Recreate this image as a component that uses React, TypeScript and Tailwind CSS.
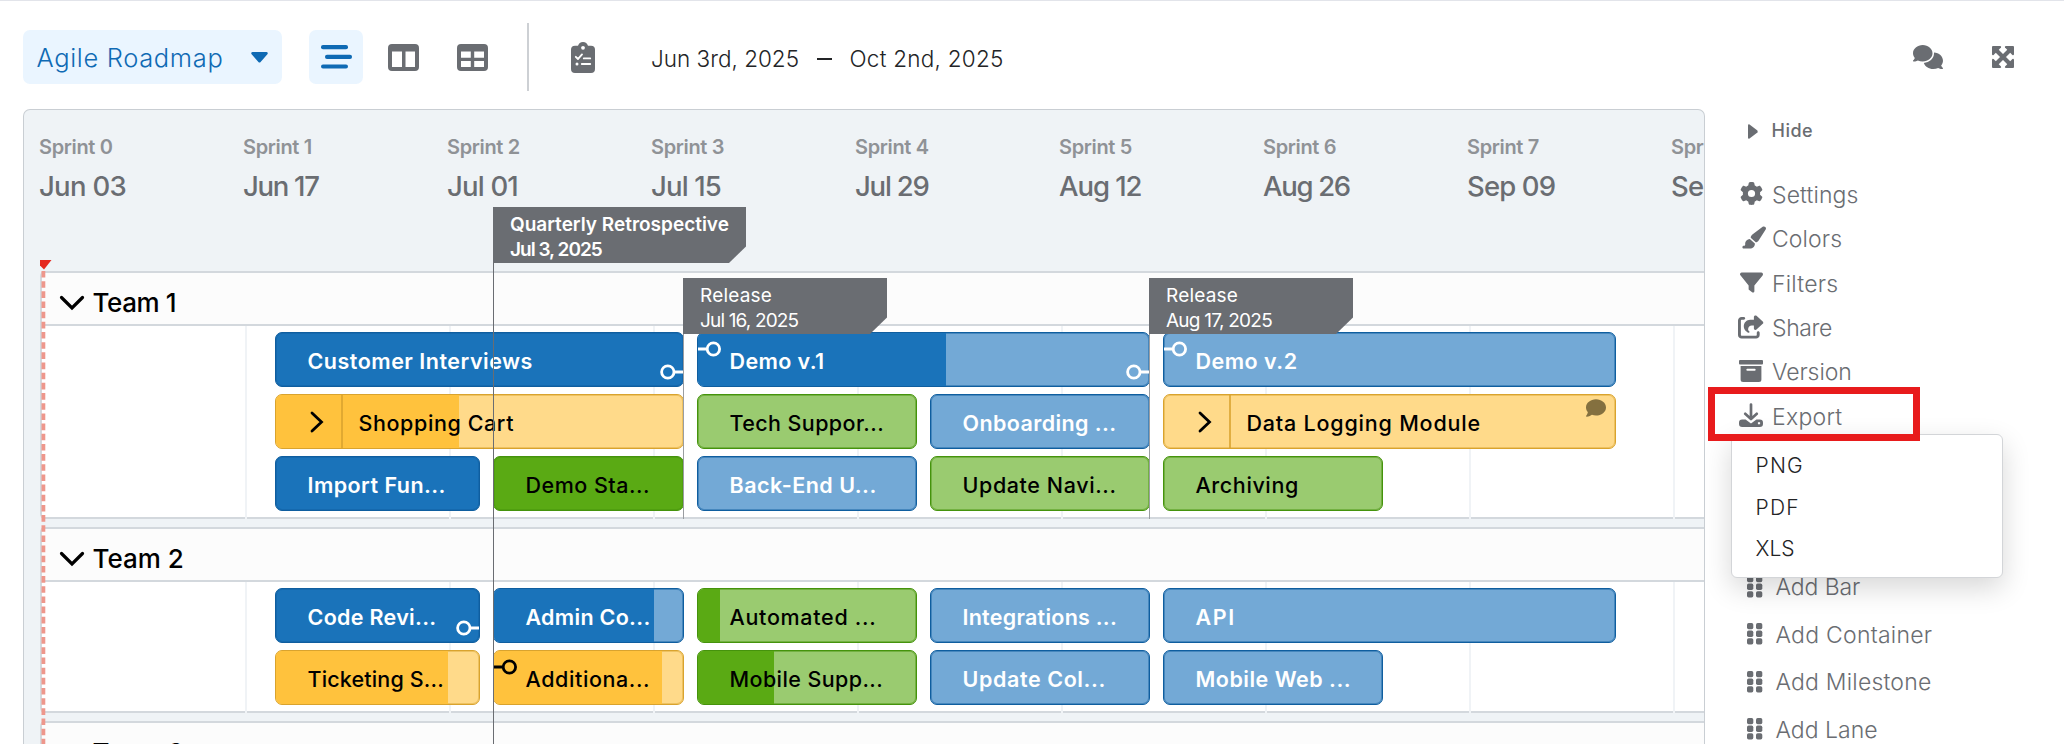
import type { ReactNode } from "react";
import {
  FaComment,
  FaComments,
  FaFilter,
  FaGear,
  FaPaintbrush,
  FaShareFromSquare,
} from "react-icons/fa6";

/* ---------- toolbar icons ---------- */

const TimelineIcon = () => (
  <svg width="31" height="24" viewBox="0 0 31 24" fill="currentColor">
    <rect x="0" y="0" width="27" height="4.2" rx="2" />
    <rect x="4" y="9.7" width="27" height="4.2" rx="2" />
    <rect x="0" y="19.4" width="27" height="4.2" rx="2" />
  </svg>
);

const ColumnsIcon = () => (
  <svg width="31" height="27" viewBox="0 0 31 27" fill="currentColor" fillRule="evenodd">
    <path d="M4 0H27a4 4 0 0 1 4 4V23a4 4 0 0 1-4 4H4a4 4 0 0 1-4-4V4a4 4 0 0 1 4-4ZM4 7.5V23H14V7.5ZM17.5 7.5V23H27V7.5Z" />
  </svg>
);

const TableIcon = () => (
  <svg width="31" height="27" viewBox="0 0 31 27" fill="currentColor" fillRule="evenodd">
    <path d="M4 0H27a4 4 0 0 1 4 4V23a4 4 0 0 1-4 4H4a4 4 0 0 1-4-4V4a4 4 0 0 1 4-4ZM4 7.5V13.7H13.8V7.5ZM17.2 7.5V13.7H27V7.5ZM4 17V23H13.8V17ZM17.2 17V23H27V17Z" />
  </svg>
);

const ClipboardIcon = () => (
  <svg width="24" height="31" viewBox="0 0 24 31">
    <path
      fill="currentColor"
      d="M12 0a5.4 5.4 0 0 1 5 3.8H20A4 4 0 0 1 24 7.8V27a4 4 0 0 1-4 4H4a4 4 0 0 1-4-4V7.8A4 4 0 0 1 4 3.8H7A5.4 5.4 0 0 1 12 0Z"
    />
    <circle cx="12" cy="5.8" r="1.9" fill="#fff" />
    <circle cx="6" cy="22" r="1.5" fill="#fff" />
    <g fill="none" stroke="#fff" strokeWidth="1.9" strokeLinecap="round" strokeLinejoin="round">
      <path d="M4.8 14.8 7 17l4-4.6" />
      <path d="M12.8 16.4h6.4M10.8 22h8.4" />
    </g>
  </svg>
);

const ExpandIcon = () => (
  <svg width="22" height="22" viewBox="0 0 22 22" fill="currentColor">
    <path d="M4.5 4.5 17.5 17.5M17.5 4.5 4.5 17.5" stroke="currentColor" strokeWidth="4.2" />
    {[0, 90, 180, 270].map((angle) => (
      <path key={angle} transform={`rotate(${angle} 11 11)`} d="M1 0H8.2Q9.6.2 9 1.6L1.6 9Q.2 9.6 0 8.2V1Q0 0 1 0Z" />
    ))}
  </svg>
);

/* ---------- sidebar icons ---------- */

const ArchiveIcon = () => (
  <svg width="24" height="22" viewBox="0 0 24 22" fill="currentColor" fillRule="evenodd">
    <rect x="0" y="0" width="24" height="4.4" rx="1" />
    <path d="M1.6 6H22.4V19.5A2.5 2.5 0 0 1 19.9 22H4.1A2.5 2.5 0 0 1 1.6 19.5ZM8.3 8.8a.9.9 0 0 0 0 1.9h7.4a.9.9 0 0 0 0-1.9Z" />
  </svg>
);

const DownloadIcon = () => (
  <svg width="24" height="24" viewBox="0 0 24 24">
    <path
      d="M12 1.5V15.6M6.2 10.8l5.8 5.2 5.8-5.2"
      fill="none"
      stroke="currentColor"
      strokeWidth="2.7"
      strokeLinecap="round"
      strokeLinejoin="round"
    />
    <path
      fill="currentColor"
      fillRule="evenodd"
      d="M3.2 16.6H6.6L12 20.6l5.4-4h3.4A3.2 3.2 0 0 1 24 19.8v1A3.2 3.2 0 0 1 20.8 24H3.2A3.2 3.2 0 0 1 0 20.8V19.8A3.2 3.2 0 0 1 3.2 16.6ZM20 19a1.2 1.2 0 1 0 .01 0Z"
    />
  </svg>
);

const GripIcon = () => (
  <svg width="16" height="22" viewBox="0 0 16 22" fill="currentColor">
    {[0, 7.6, 15.2].map((y) => (
      <g key={y}>
        <rect x="0" y={y} width="6.3" height="6.3" rx="1.7" />
        <rect x="9" y={y} width="6.3" height="6.3" rx="1.7" />
      </g>
    ))}
  </svg>
);

/* ---------- roadmap data ---------- */

const sprints = [
  { name: "Sprint 0", date: "Jun 03", track: "tracking-[-0.7px]" },
  { name: "Sprint 1", date: "Jun 17", track: "tracking-[-1.3px]" },
  { name: "Sprint 2", date: "Jul 01", track: "tracking-[-0.8px]" },
  { name: "Sprint 3", date: "Jul 15", track: "tracking-[-0.85px]" },
  { name: "Sprint 4", date: "Jul 29", track: "tracking-[-1.2px]" },
  { name: "Sprint 5", date: "Aug 12", track: "tracking-[-1.05px]" },
  { name: "Sprint 6", date: "Aug 26", track: "tracking-[-1.3px]" },
  { name: "Sprint 7", date: "Sep 09", track: "tracking-[-0.85px]" },
  { name: "Sprint 8", date: "Sep 23", track: "tracking-[-0.75px]" },
];

type Tone = "blue" | "lightBlue" | "green" | "lightGreen" | "yellow" | "lightYellow";

const tones: Record<Tone, string> = {
  blue: "bg-[#1a73ba] border-[#0f5e9f] text-white font-semibold",
  lightBlue: "bg-[#73a9d6] border-[#0f5e9f] text-white font-semibold",
  green: "bg-[#5aaa14] border-[#45930c] text-black font-medium",
  lightGreen: "bg-[#9acb70] border-[#45930c] text-black font-medium",
  yellow: "bg-[#ffc23d] border-[#d9a32e] text-black font-medium",
  lightYellow: "bg-[#ffda8a] border-[#d9a32e] text-black font-medium",
};

const innerEdge: Record<Tone, string> = {
  blue: "shadow-[inset_0_0_0_1px_rgba(15,94,159,0.45)]",
  lightBlue: "shadow-[inset_0_0_0_1px_rgba(15,94,159,0.45)]",
  green: "shadow-[inset_0_0_0_1px_rgba(69,147,12,0.45)]",
  lightGreen: "shadow-[inset_0_0_0_1px_rgba(69,147,12,0.45)]",
  yellow: "shadow-[inset_0_0_0_1px_rgba(217,163,46,0.45)]",
  lightYellow: "shadow-[inset_0_0_0_1px_rgba(217,163,46,0.45)]",
};

type BarData = {
  label: string;
  size: string; // left margin, width
  tone: Tone;
  done?: string; // colour and width of the completed part
  track?: string;
  group?: boolean;
  comment?: boolean;
  linkIn?: boolean;
  linkOut?: boolean;
};

const team1: BarData[][] = [
  [
    { label: "Customer Interviews", size: "ml-[233px] w-[409px]", tone: "blue", linkOut: true },
    {
      label: "Demo v.1",
      size: "ml-[13px] w-[453px]",
      tone: "lightBlue",
      done: "w-[248px] bg-[#1a73ba]",
      track: "tracking-[0.4px]",
      linkIn: true,
      linkOut: true,
    },
    { label: "Demo v.2", size: "ml-[13px] w-[453px]", tone: "lightBlue", linkIn: true },
  ],
  [
    {
      label: "Shopping Cart",
      size: "ml-[233px] w-[409px]",
      tone: "lightYellow",
      done: "w-[183px] bg-[#ffc23d]",
      track: "tracking-[0.6px]",
      group: true,
    },
    { label: "Tech Suppor...", size: "ml-[13px] w-[220px]", tone: "lightGreen", track: "tracking-[0.4px]" },
    { label: "Onboarding ...", size: "ml-[13px] w-[220px]", tone: "lightBlue", track: "tracking-[0.4px]" },
    {
      label: "Data Logging Module",
      size: "ml-[13px] w-[453px]",
      tone: "lightYellow",
      track: "tracking-[0.8px]",
      group: true,
      comment: true,
    },
  ],
  [
    { label: "Import Fun...", size: "ml-[233px] w-[205px]", tone: "blue", track: "tracking-[0.45px]" },
    { label: "Demo Sta...", size: "ml-[13px] w-[191px]", tone: "green", track: "tracking-[0.5px]" },
    { label: "Back-End U...", size: "ml-[13px] w-[220px]", tone: "lightBlue" },
    { label: "Update Navi...", size: "ml-[13px] w-[220px]", tone: "lightGreen", track: "tracking-[0.6px]" },
    { label: "Archiving", size: "ml-[13px] w-[220px]", tone: "lightGreen", track: "tracking-[0.6px]" },
  ],
];

const team2: BarData[][] = [
  [
    { label: "Code Revi...", size: "ml-[233px] w-[205px]", tone: "blue", track: "tracking-[0.3px]", linkOut: true },
    { label: "Admin Co...", size: "ml-[13px] w-[191px]", tone: "lightBlue", done: "w-[160px] bg-[#1a73ba]", track: "tracking-[0.3px]" },
    { label: "Automated ...", size: "ml-[13px] w-[220px]", tone: "lightGreen", done: "w-[22px] bg-[#5aaa14]", track: "tracking-[0.7px]" },
    { label: "Integrations ...", size: "ml-[13px] w-[220px]", tone: "lightBlue", track: "tracking-[0.25px]" },
    { label: "API", size: "ml-[13px] w-[453px]", tone: "lightBlue", track: "tracking-[1.6px]" },
  ],
  [
    { label: "Ticketing S...", size: "ml-[233px] w-[205px]", tone: "lightYellow", done: "w-[172px] bg-[#ffc23d]", track: "tracking-[0.15px]" },
    { label: "Additiona...", size: "ml-[13px] w-[191px]", tone: "lightYellow", done: "w-[168px] bg-[#ffc23d]", track: "tracking-[0.6px]", linkIn: true },
    { label: "Mobile Supp...", size: "ml-[13px] w-[220px]", tone: "lightGreen", done: "w-[76px] bg-[#5aaa14]", track: "tracking-[0.4px]" },
    { label: "Update Col...", size: "ml-[13px] w-[220px]", tone: "lightBlue", track: "tracking-[0.6px]" },
    { label: "Mobile Web ...", size: "ml-[13px] w-[220px]", tone: "lightBlue", track: "tracking-[0.5px]" },
  ],
];

/* ---------- roadmap pieces ---------- */

function Bar({ bar }: { bar: BarData }) {
  return (
    <div
      className={`relative flex h-[55px] shrink-0 items-center overflow-hidden rounded-[7px] border ${tones[bar.tone]} ${innerEdge[bar.tone]} ${bar.size}`}
    >
      {bar.done && <div className={`absolute inset-y-0 left-0 ${bar.done}`} />}
      {bar.group && (
        <div className="relative flex h-full w-[67px] shrink-0 items-center justify-end border-r-2 border-[#d9a32e]/80 pr-[16px]">
          <svg width="15" height="22" viewBox="0 0 15 22" fill="none" stroke="#000" strokeWidth="2.8" strokeLinecap="round" strokeLinejoin="miter">
            <path d="M2 2l9.5 9L2 20" />
          </svg>
        </div>
      )}
      <span
        className={`relative whitespace-pre pt-[2px] text-[21.5px] leading-[26px] ${bar.group ? "pl-[15.5px]" : "pl-[31.5px]"} ${bar.track ?? "tracking-[0.5px]"}`}
      >
        {bar.label}
      </span>
      {bar.comment && <FaComment className="absolute top-[3px] right-[9px] h-[20px] w-[20px] text-[#84703f]" />}
      {bar.linkIn && (
        <svg className="absolute top-[8px] left-0" width="24" height="16" viewBox="0 0 24 16" fill="none" stroke="currentColor" strokeWidth="2.8">
          <circle cx="15.4" cy="8" r="6.2" />
          <path d="M0 8h9.5" />
        </svg>
      )}
      {bar.linkOut && (
        <svg className="absolute top-[30.5px] right-0" width="24" height="16" viewBox="0 0 24 16" fill="none" stroke="currentColor" strokeWidth="2.8">
          <circle cx="8.8" cy="8" r="6.2" />
          <path d="M15 8h9" />
        </svg>
      )}
    </div>
  );
}

function Lane({ name, rows, track }: { name: string; rows: BarData[][]; track: string }) {
  return (
    <section className="ml-4 shrink-0 rounded-l-[5px] border-2 border-r-0 border-[#d3d8dd] bg-white">
      <header className="flex h-[53px] items-center border-b-2 border-[#d3d8dd] bg-[#fcfcfc] pt-2 pl-[17px]">
        <svg width="26" height="16" viewBox="0 0 26 16" fill="none" stroke="#000" strokeWidth="3.2" strokeLinecap="round">
          <path d="M2.5 2.5 13 13 23.5 2.5" />
        </svg>
        <h2 className={`pl-[7.5px] text-[26px] leading-8 font-medium text-black ${track}`}>{name}</h2>
      </header>
      <div className="relative flex flex-col gap-[7px] py-1.5">
        <div className="absolute inset-x-0 top-0 -bottom-0.5 flex">
          <div className="w-[203px] shrink-0" />
          {sprints.slice(1).map((s) => (
            <div key={s.name} className="w-[204px] shrink-0 border-l-2 border-[#f0f3f6] last:w-[32px]" />
          ))}
        </div>
        {rows.map((row, i) => (
          <div key={i} className="relative flex">
            {row.map((bar) => (
              <Bar key={bar.label} bar={bar} />
            ))}
          </div>
        ))}
      </div>
    </section>
  );
}

function Flag({ title, date, place, titleClass, dateClass }: { title: string; date: string; place: string; titleClass: string; dateClass: string }) {
  return (
    <div
      className={`absolute h-[56px] bg-[#6a6d72] pt-[5px] pl-[17px] text-[19px] leading-[25px] whitespace-nowrap text-white [clip-path:polygon(0_0,100%_0,100%_39.5px,calc(100%-17px)_100%,0_100%)] ${place}`}
    >
      <div className={titleClass}>{title}</div>
      <div className={dateClass}>{date}</div>
    </div>
  );
}

function SideItem({ icon, label, track }: { icon: ReactNode; label: string; track?: string }) {
  return (
    <div className="flex h-[44.3px] items-center">
      <span className="flex w-[26px] justify-center pb-[1px]">{icon}</span>
      <span className={`pt-[2px] pl-[8px] text-[23px] leading-7 font-[350] ${track ?? "tracking-[0.1px]"}`}>{label}</span>
    </div>
  );
}

function AddItem({ label, track }: { label: string; track: string }) {
  return (
    <div className="flex h-[47.5px] items-center pl-[9px]">
      <GripIcon />
      <span className={`pt-[1px] pl-[12.5px] text-[23px] leading-7 font-[350] ${track}`}>{label}</span>
    </div>
  );
}

export default function App() {
  return (
    <div className="flex h-[744px] w-[2064px] flex-col overflow-hidden border-t border-[#e2e4ea] bg-white font-['Inter',sans-serif] text-[#6a6d72]">
      <nav className="flex h-[108px] shrink-0 items-center pt-1 pl-[23px]">
        <button className="flex h-[54px] w-[259px] items-center justify-between rounded-[7px] bg-[#eaf5ff] pt-[1px] pr-[14px] pl-[13.5px] text-[25.5px] leading-8 font-[350] tracking-[0.65px] text-[#0f6ab4]">
          Agile Roadmap
          <svg width="17" height="11" viewBox="0 0 17 11" fill="currentColor">
            <path d="M1.5 0H15.5A1.3 1.3 0 0 1 16.4 2.2L9.6 10A1.6 1.6 0 0 1 7.4 10L.6 2.2A1.3 1.3 0 0 1 1.5 0Z" />
          </svg>
        </button>
        <div className="ml-[27px] flex h-[54px] w-[54px] items-center justify-center rounded-[7px] bg-[#eaf5ff] text-[#0f6ab4]">
          <TimelineIcon />
        </div>
        <div className="ml-[25px]">
          <ColumnsIcon />
        </div>
        <div className="ml-[38px]">
          <TableIcon />
        </div>
        <div className="ml-[39px] h-[68px] w-[2px] bg-[#cdd0d4]" />
        <div className="ml-[42px]">
          <ClipboardIcon />
        </div>
        <div className="ml-[56px] flex items-center pt-[3px] text-[22.5px] leading-7 font-[350] text-[#232426]">
          <span className="tracking-[0px]">Jun 3rd, 2025</span>
          <span className="ml-[18px] h-[2px] w-[15px] bg-[#232426]" />
          <span className="ml-[17.5px] tracking-[0.25px]">Oct 2nd, 2025</span>
        </div>
        <div className="ml-auto flex items-center gap-[49px] pr-[50px]">
          <FaComments className="h-[30px] w-[30px]" />
          <ExpandIcon />
        </div>
      </nav>

      <div className="flex min-h-0 flex-1">
        <main className="relative ml-[23px] flex w-[1682px] shrink-0 flex-col gap-2 overflow-hidden rounded-t-[7px] border border-b-0 border-[#c9ced3] bg-[#eff3f6]">
          <div className="mb-[-8px] flex h-[161px] shrink-0 pt-[23px] pl-[15px]">
            {sprints.map((s) => (
              <div key={s.name} className="w-[204px] shrink-0">
                <div className="text-[20px] leading-7 font-semibold tracking-[-0.35px] text-[#8f9296]">{s.name}</div>
                <div className={`pt-[7px] text-[27.5px] leading-9 font-medium ${s.track}`}>{s.date}</div>
              </div>
            ))}
          </div>
          <Lane name="Team 1" rows={team1} track="tracking-[-0.4px]" />
          <Lane name="Team 2" rows={team2} track="tracking-[0px]" />
          <Lane name="Team 3" rows={[]} track="tracking-[0px]" />

          {/* today marker */}
          <svg className="absolute top-[150px] left-[15.5px]" width="12" height="490" viewBox="0 0 12 490">
            <path d="M0 0H11.5L4 9.5 0 5.5Z" fill="#e5281f" />
            <path d="M3.4 11V490" stroke="#ee978c" strokeWidth="3.8" strokeDasharray="6.6 3.57" />
          </svg>

          {/* milestones */}
          <div className="absolute top-[152px] left-[469px] h-[490px] w-px bg-[#6a6d72]" />
          <div className="absolute top-[223px] left-[659px] h-[186px] w-px bg-[#9a9da1]" />
          <div className="absolute top-[223px] left-[1125px] h-[186px] w-px bg-[#9a9da1]" />
          <Flag
            title="Quarterly Retrospective"
            date="Jul 3, 2025"
            place="top-[97px] left-[469px] w-[253px]"
            titleClass="font-semibold"
            dateClass="font-semibold tracking-[-1px]"
          />
          <Flag
            title="Release"
            date="Jul 16, 2025"
            place="top-[168px] left-[659px] w-[204px]"
            titleClass="tracking-[0.2px]"
            dateClass="tracking-[-0.85px]"
          />
          <Flag
            title="Release"
            date="Aug 17, 2025"
            place="top-[168px] left-[1125px] w-[204px]"
            titleClass="tracking-[0.2px]"
            dateClass="tracking-[-0.75px]"
          />
        </main>

        <aside className="relative flex-1 pl-[33px]">
          <div className="flex h-11 items-center">
            <svg className="ml-[10px]" width="10" height="15" viewBox="0 0 10 15" fill="currentColor">
              <path d="M0 1.2Q0 0 1.2.2L9.4 6.5Q10 7.5 9.4 8.5L1.2 14.8Q0 15 0 13.8Z" />
            </svg>
            <span className="pl-[13.5px] text-[18px] leading-6 font-medium tracking-[0.5px]">Hide</span>
          </div>
          <div className="pt-[19px]">
            <SideItem icon={<FaGear className="h-[23px] w-[23px]" />} label="Settings" />
            <SideItem icon={<FaPaintbrush className="ml-[4px] h-[25px] w-[25px] shrink-0" />} label="Colors" />
            <SideItem icon={<FaFilter className="h-[23px] w-[23px]" />} label="Filters" track="tracking-[0.2px]" />
            <SideItem icon={<FaShareFromSquare className="h-[26px] w-[26px]" />} label="Share" track="tracking-[-0.4px]" />
            <SideItem icon={<ArchiveIcon />} label="Version" track="tracking-[-0.1px]" />
            <SideItem icon={<DownloadIcon />} label="Export" track="tracking-[0.25px]" />
          </div>
          <div className="pt-[125px]">
            <AddItem label="Add Bar" track="tracking-[-0.1px]" />
            <AddItem label="Add Container" track="tracking-[0.25px]" />
            <AddItem label="Add Milestone" track="tracking-[0.2px]" />
            <AddItem label="Add Lane" track="tracking-[0px]" />
          </div>

          {/* export menu */}
          <ul className="absolute top-[325px] left-[26px] h-[144px] w-[272px] rounded-[6px] border border-[#d3d5d8] bg-white pt-[10px] pl-[23.5px] text-[21px] leading-[41.6px] font-[350] text-[#232426] shadow-[0_10px_28px_rgba(0,0,0,0.16)]">
            <li className="tracking-[1.2px]">PNG</li>
            <li className="tracking-[1.2px]">PDF</li>
            <li>XLS</li>
          </ul>
          <div className="absolute top-[278px] left-[3px] h-[54px] w-[212px] border-[7px] border-[#e81b1c]" />
        </aside>
      </div>
    </div>
  );
}
